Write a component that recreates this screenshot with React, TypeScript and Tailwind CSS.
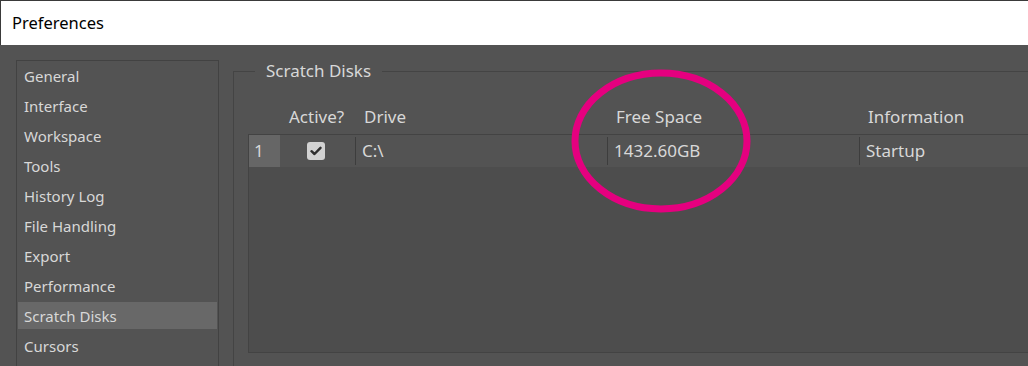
const NAV = [
  "General",
  "Interface",
  "Workspace",
  "Tools",
  "History Log",
  "File Handling",
  "Export",
  "Performance",
  "Scratch Disks",
  "Cursors",
];

const COLS = "grid grid-cols-[31px_75px_252px_252px_1fr]";

function Sep() {
  return <span className="my-[2px] w-px shrink-0 self-stretch bg-[#3d3d3d]" />;
}

export default function App() {
  return (
    <div className="relative h-[366px] w-[1028px] overflow-hidden bg-[#535353] font-['Noto_Sans',sans-serif] text-[17px] text-[#d8d8d8]">
      <div className="flex h-[45px] items-center border-l border-t border-[#3a3a3a] bg-white pl-[11px] pt-px text-[16.5px] text-black">
        Preferences
      </div>

      <div className="flex pl-[16px] pt-[15px]">
        <ul className="h-[320px] w-[203px] shrink-0 border border-[#424242] px-px pt-px text-[15px]">
          {NAV.map((n) => (
            <li
              key={n}
              className={`mb-[3px] flex h-[27px] items-center pl-[6px] pt-[2px] ${n === "Scratch Disks" ? "bg-[#686868]" : ""}`}
            >
              {n}
            </li>
          ))}
        </ul>

        <fieldset className="ml-[14px] mt-[1px] h-[320px] w-[820px] shrink-0 border border-[#444444] pl-[14px]">
          <legend className="ml-[7px] px-[11px] leading-[20px]">Scratch Disks</legend>

          <div className={`${COLS} h-[53px] items-end pb-[7px] pl-px leading-[20px]`}>
            <span />
            <span className="pl-[9px]">Active?</span>
            <span className="pl-[9px]">Drive</span>
            <span className="pl-[9px]">Free Space</span>
            <span className="pl-[9px]">Information</span>
          </div>

          <div className="h-[219px] border-b border-l border-t border-[#434343] bg-[#4d4d4d]">
            <div className={`${COLS} h-[32px] bg-[#535353]`}>
              <div className="flex items-center bg-[#666666] pl-[5px]">1</div>
              <div className="flex items-center pl-[27px]">
                <span className="flex h-[18px] w-[18px] items-center justify-center rounded-[3px] bg-[#d2d2d2]">
                  <svg width="12" height="10" viewBox="0 0 12 10">
                    <path d="M1.5 5.2 L4.5 8 L10.5 1.8" fill="none" stroke="#2f2f2f" strokeWidth="2.4" strokeLinecap="round" strokeLinejoin="round" />
                  </svg>
                </span>
              </div>
              <div className="flex items-stretch">
                <Sep />
                <span className="flex items-center pl-[6px]">C:\</span>
              </div>
              <div className="flex items-stretch">
                <Sep />
                <span className="flex items-center pl-[6px]">1432.60GB</span>
              </div>
              <div className="flex items-stretch">
                <Sep />
                <span className="flex items-center pl-[6px]">Startup</span>
              </div>
            </div>
          </div>
        </fieldset>
      </div>

      <svg className="absolute left-[569px] top-[68px]" width="186" height="148" viewBox="0 0 186 148">
        <ellipse cx="92" cy="73" rx="86" ry="68" fill="none" stroke="#e5007f" strokeWidth="7" />
      </svg>
    </div>
  );
}
